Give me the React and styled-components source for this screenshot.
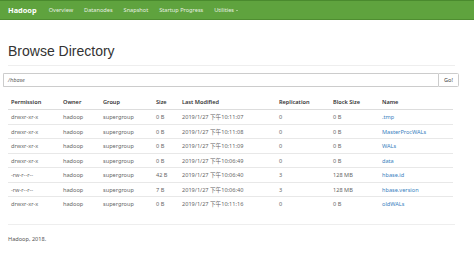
import React from "react";
import styled, { createGlobalStyle } from "styled-components";

const GlobalStyle = createGlobalStyle`
  html, body {
    margin: 0;
    padding: 0;
    background: #fff;
  }
  body {
    font-family: "Noto Sans", "Noto Sans CJK SC", sans-serif;
    color: #555;
  }
`;

const Navbar = styled.nav`
  height: 18px;
  background-color: #5fa33e;
  border-top: 1px solid #4a8a2e;
  border-bottom: 1px solid #4f8d31;
  display: flex;
  align-items: center;
  padding: 0 8px;
`;

const Brand = styled.span`
  font-size: 7.4px;
  font-weight: 700;
  color: #fff;
  margin-right: 12px;
`;

const NavLink = styled.span`
  font-size: 5.6px;
  color: #e6f0e0;
  margin-right: 11px;
  display: flex;
  align-items: center;
  gap: 2px;
`;

const Caret = styled.span`
  width: 0;
  height: 0;
  border-left: 1.5px solid transparent;
  border-right: 1.5px solid transparent;
  border-top: 1.5px solid #e6f0e0;
`;

const Container = styled.div`
  padding: 0 19px 0 8px;
`;

const PageHeader = styled.div`
  margin-top: 24px;
  padding-bottom: 6px;
  border-bottom: 1px solid #eee;
`;

const Title = styled.h1`
  margin: 0;
  font-family: "Liberation Sans", Arial, sans-serif;
  font-weight: 400;
  font-size: 14px;
  line-height: 15.4px;
  color: #333;
`;

const SearchForm = styled.div`
  display: flex;
  margin: 7px -4px 0 -5px;
  height: 14px;
`;

const SearchInput = styled.div`
  flex: 1;
  border: 1px solid #ccc;
  border-right: none;
  border-radius: 1.5px 0 0 1.5px;
  font-size: 5.6px;
  color: #666;
  display: flex;
  align-items: center;
  padding-left: 4px;
  font-style: italic;
`;

const GoButton = styled.div`
  width: 19px;
  border: 1px solid #ccc;
  border-radius: 0 1.5px 1.5px 0;
  font-size: 5.6px;
  color: #444;
  display: flex;
  align-items: center;
  justify-content: center;
`;

const Table = styled.table`
  width: 445px;
  margin-top: 8px;
  border-collapse: collapse;
  table-layout: fixed;
  font-size: 5.6px;
`;

const Th = styled.th`
  text-align: left;
  font-weight: 600;
  color: #333;
  height: 14px;
  padding: 0 3px;
  border-bottom: 1px solid #ddd;
  white-space: nowrap;
`;

const Td = styled.td`
  height: 13.5px;
  padding: 0 3px;
  border-top: 1px solid #e8e8e8;
  color: ${(p) => (p.$link ? "#3a7fc0" : "#666")};
  white-space: nowrap;
  overflow: hidden;
`;

const Footer = styled.footer`
  margin-top: 13px;
  border-top: 1px solid #eee;
  padding-top: 10px;
  font-size: 5.6px;
  color: #555;
`;

const columns = [
  { label: "Permission", width: 52 },
  { label: "Owner", width: 40 },
  { label: "Group", width: 53 },
  { label: "Size", width: 26 },
  { label: "Last Modified", width: 97 },
  { label: "Replication", width: 54 },
  { label: "Block Size", width: 49 },
  { label: "Name", width: 74 },
];

const rows = [
  ["drwxr-xr-x", "hadoop", "supergroup", "0 B", "2019/1/27 下午10:11:07", "0", "0 B", ".tmp"],
  ["drwxr-xr-x", "hadoop", "supergroup", "0 B", "2019/1/27 下午10:11:08", "0", "0 B", "MasterProcWALs"],
  ["drwxr-xr-x", "hadoop", "supergroup", "0 B", "2019/1/27 下午10:11:09", "0", "0 B", "WALs"],
  ["drwxr-xr-x", "hadoop", "supergroup", "0 B", "2019/1/27 下午10:06:49", "0", "0 B", "data"],
  ["-rw-r--r--", "hadoop", "supergroup", "42 B", "2019/1/27 下午10:06:40", "3", "128 MB", "hbase.id"],
  ["-rw-r--r--", "hadoop", "supergroup", "7 B", "2019/1/27 下午10:06:40", "3", "128 MB", "hbase.version"],
  ["drwxr-xr-x", "hadoop", "supergroup", "0 B", "2019/1/27 下午10:11:16", "0", "0 B", "oldWALs"],
];

export default function App() {
  return (
    <>
      <GlobalStyle />
      <Navbar>
        <Brand>Hadoop</Brand>
        <NavLink>Overview</NavLink>
        <NavLink>Datanodes</NavLink>
        <NavLink>Snapshot</NavLink>
        <NavLink>Startup Progress</NavLink>
        <NavLink>
          Utilities <Caret />
        </NavLink>
      </Navbar>
      <Container>
        <PageHeader>
          <Title>Browse Directory</Title>
        </PageHeader>
        <SearchForm>
          <SearchInput>/hbase</SearchInput>
          <GoButton>Go!</GoButton>
        </SearchForm>
        <Table>
          <colgroup>
            {columns.map((c) => (
              <col key={c.label} style={{ width: c.width }} />
            ))}
          </colgroup>
          <thead>
            <tr>
              {columns.map((c) => (
                <Th key={c.label}>{c.label}</Th>
              ))}
            </tr>
          </thead>
          <tbody>
            {rows.map((r) => (
              <tr key={r[7]}>
                {r.map((cell, i) => (
                  <Td key={i} $link={i === 7}>
                    {cell}
                  </Td>
                ))}
              </tr>
            ))}
          </tbody>
        </Table>
        <Footer>Hadoop, 2018.</Footer>
      </Container>
    </>
  );
}
